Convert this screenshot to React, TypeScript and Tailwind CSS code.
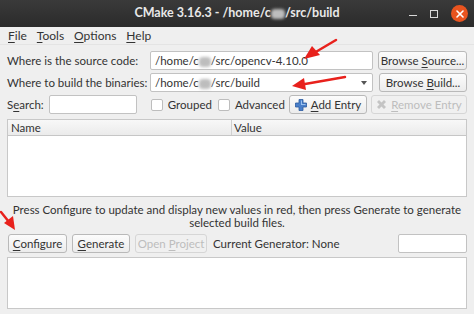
const font = { fontFamily: 'Lato, "Open Sans", sans-serif' }

function U({ children }: { children: string }) {
  return <span className="underline underline-offset-2">{children}</span>
}

function Btn({
  children,
  className = '',
  disabled = false,
}: {
  children: React.ReactNode
  className?: string
  disabled?: boolean
}) {
  return (
    <div
      className={`flex h-[19px] shrink-0 items-center justify-center whitespace-nowrap rounded-[3px] border px-1 ${
        disabled
          ? 'border-[#d6d6d6] bg-[#f0f0f0] text-[#bdbdbd]'
          : 'border-[#b9b9b9] bg-gradient-to-b from-[#fcfcfc] to-[#ececec] text-[#333]'
      } ${className}`}
    >
      {children}
    </div>
  )
}

function Blur({ w }: { w: number }) {
  return (
    <span
      className="inline-block h-[10px] rounded-sm bg-[#bdbdbd] align-middle blur-[1.5px]"
      style={{ width: w }}
    />
  )
}

function Check({ label }: { label: string }) {
  return (
    <div className="flex shrink-0 items-center gap-[5px] whitespace-nowrap">
      <div className="h-[12px] w-[12px] rounded-[2px] border border-[#bdbdbd] bg-white" />
      <span>{label}</span>
    </div>
  )
}

function Arrows() {
  return (
    <svg className="pointer-events-none absolute inset-0" width="474" height="314">
      <g fill="#e8211c" stroke="#e8211c" strokeLinecap="round">
        <line x1="336" y1="40" x2="314" y2="53" strokeWidth="2.5" />
        <polygon points="304,59 312,46 320,55" stroke="none" />
        <line x1="345" y1="77" x2="305" y2="84" strokeWidth="2.5" />
        <polygon points="292,86 304,78 306,90" stroke="none" />
        <line x1="1" y1="212" x2="9" y2="222" strokeWidth="2.5" />
        <polygon points="15,230 4,223 13,216" stroke="none" />
      </g>
    </svg>
  )
}

export default function App() {
  return (
    <div
      className="relative flex h-[314px] w-[474px] flex-col overflow-hidden whitespace-nowrap bg-[#efefef] text-[11.5px] text-[#333]"
      style={font}
    >
      {/* title bar */}
      <div className="relative flex h-[27px] shrink-0 items-center justify-center bg-gradient-to-b from-[#3a3a3a] to-[#2b2b2b] text-[12.5px] font-bold text-[#e8e8e8]">
        <span>
          CMake 3.16.3 - /home/c<Blur w={14} />/src/build
        </span>
        <div className="absolute right-[6px] top-0 flex h-full items-center gap-[13px] text-[#d8d8d8]">
          <div className="mt-[4px] h-[1.5px] w-[8px] bg-[#d8d8d8]" />
          <div className="h-[8px] w-[8px] border border-[#d8d8d8]" />
          <div className="flex h-[17px] w-[17px] items-center justify-center rounded-full bg-[#e9541f]">
            <svg width="8" height="8" viewBox="0 0 8 8" stroke="white" strokeWidth="1.6" strokeLinecap="round">
              <line x1="1" y1="1" x2="7" y2="7" />
              <line x1="7" y1="1" x2="1" y2="7" />
            </svg>
          </div>
        </div>
      </div>

      {/* menu */}
      <div className="flex h-[18px] shrink-0 items-center gap-[10px] border-b border-[#e4e4e4] px-[8px] text-[12px]">
        <span><U>F</U>ile</span>
        <span><U>T</U>ools</span>
        <span><U>O</U>ptions</span>
        <span><U>H</U>elp</span>
      </div>

      <div className="flex flex-1 flex-col px-[7px] pt-[6px]">
        {/* source row */}
        <div className="flex h-[19px] items-center">
          <span className="w-[143px] shrink-0">Where is the source code:</span>
          <div className="flex h-full min-w-0 flex-1 items-center rounded-[2px] border border-[#c2c2c2] bg-white px-[4px]">
            <span>
              /home/c<Blur w={12} />/src/opencv-4.10.0
            </span>
          </div>
          <Btn className="ml-[5px] w-[89px]">
            <span>
              Browse <U>S</U>ource...
            </span>
          </Btn>
        </div>

        {/* build row */}
        <div className="mt-[3px] flex h-[19px] items-center">
          <span className="w-[143px] shrink-0">Where to build the binaries:</span>
          <div className="flex h-full min-w-0 flex-1 items-center justify-between rounded-[2px] border border-[#c2c2c2] bg-white pl-[4px] pr-[5px]">
            <span>
              /home/c<Blur w={12} />/src/build
            </span>
            <svg width="6" height="4" viewBox="0 0 6 4">
              <polygon points="0,0 6,0 3,4" fill="#555" />
            </svg>
          </div>
          <Btn className="ml-[6px] w-[88px]">
            <span>
              Browse <U>B</U>uild...
            </span>
          </Btn>
        </div>

        {/* search row */}
        <div className="mt-[3px] flex h-[19px] items-center">
          <span className="shrink-0">
            S<U>e</U>arch:
          </span>
          <div className="ml-[5px] h-full w-[88px] shrink-0 rounded-[2px] border border-[#c2c2c2] bg-white" />
          <div className="ml-[14px]">
            <Check label="Grouped" />
          </div>
          <div className="ml-[6px]">
            <Check label="Advanced" />
          </div>
          <Btn className="ml-auto w-[78px] gap-1">
            <svg width="12" height="12" viewBox="0 0 12 12">
              <path d="M4 0.5h4v3.5h3.5v4H8v3.5H4V8H0.5V4H4z" fill="#4a7fc9" stroke="#2c5aa0" strokeWidth="0.8" />
              <path d="M5 1.5h2v3.5h3.5v1H6v-4.5z" fill="#9cc2ef" />
            </svg>
            <span>
              <U>A</U>dd Entry
            </span>
          </Btn>
          <Btn disabled className="ml-[4px] w-[96px] gap-1">
            <svg width="11" height="11" viewBox="0 0 11 11">
              <path d="M1 3l2-2 2.5 2.5L8 1l2 2-2.5 2.5L10 8l-2 2-2.5-2.5L3 10l-2-2 2.5-2.5z" fill="#c4c4c4" />
            </svg>
            <span>
              <U>R</U>emove Entry
            </span>
          </Btn>
        </div>

        {/* table */}
        <div className="mt-[5px] flex h-[78px] flex-col border border-[#c8c8c8] bg-white">
          <div className="flex h-[16px] border-b border-[#c6c6c6] bg-gradient-to-b from-[#f8f8f8] to-[#ebebeb]">
            <div className="w-[224px] border-r border-[#d0d0d0] pl-[3px] leading-[15px]">Name</div>
            <div className="pl-[2px] leading-[15px]">Value</div>
          </div>
        </div>

        {/* info text */}
        <div className="mt-[6px] text-center leading-[13px]">
          Press Configure to update and display new values in red, then press Generate to generate
          <br />
          selected build files.
        </div>

        {/* action row */}
        <div className="mt-[5px] flex h-[19px] items-center">
          <Btn className="ml-[1px] w-[59px]">
            <span>
              <U>C</U>onfigure
            </span>
          </Btn>
          <Btn className="ml-[5px] w-[58px]">
            <span>
              <U>G</U>enerate
            </span>
          </Btn>
          <Btn disabled className="ml-[5px] w-[72px]">
            <span>
              Open <U>P</U>roject
            </span>
          </Btn>
          <span className="ml-[6px]">Current Generator: None</span>
          <div className="ml-auto h-full w-[69px] rounded-[2px] border border-[#c2c2c2] bg-white" />
        </div>

        {/* output */}
        <div className="mt-[4px] h-[52px] border border-[#c8c8c8] bg-white" />
      </div>

      <Arrows />
    </div>
  )
}
